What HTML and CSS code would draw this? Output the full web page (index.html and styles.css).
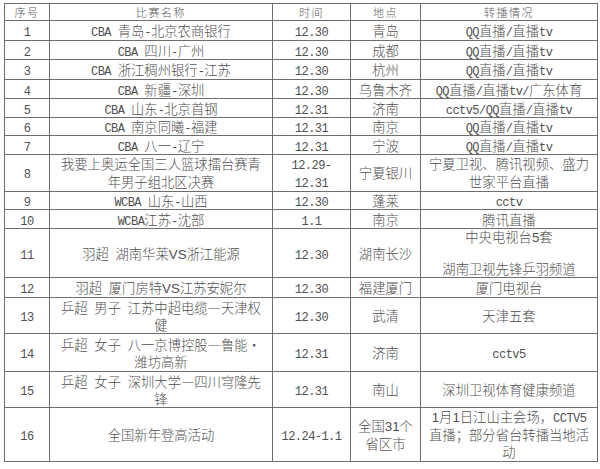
FILE: index.html
```html
<!DOCTYPE html>
<html lang="zh">
<head>
<meta charset="utf-8">
<title>赛事转播</title>
<link rel="stylesheet" href="styles.css">
</head>
<body>
<table class="sched">
  <colgroup>
    <col class="c1"><col class="c2"><col class="c3"><col class="c4"><col class="c5">
  </colgroup>
  <thead>
    <tr class="h17"><th>序号</th><th>比赛名称</th><th>时间</th><th>地点</th><th>转播情况</th></tr>
  </thead>
  <tbody>
    <tr class="h20"><td><span class="en">1</span></td><td><span class="en">CBA </span>青岛<span class="en">-</span>北京农商银行</td><td><span class="en">12.30</span></td><td>青岛</td><td><span class="en">QQ</span>直播<span class="en">/</span>直播<span class="en">tv</span></td></tr>
    <tr class="h19"><td><span class="en">2</span></td><td><span class="en">CBA </span>四川<span class="en">-</span>广州</td><td><span class="en">12.30</span></td><td>成都</td><td><span class="en">QQ</span>直播<span class="en">/</span>直播<span class="en">tv</span></td></tr>
    <tr class="h20"><td><span class="en">3</span></td><td><span class="en">CBA </span>浙江稠州银行<span class="en">-</span>江苏</td><td><span class="en">12.30</span></td><td>杭州</td><td><span class="en">QQ</span>直播<span class="en">/</span>直播<span class="en">tv</span></td></tr>
    <tr class="h19"><td><span class="en">4</span></td><td><span class="en">CBA </span>新疆<span class="en">-</span>深圳</td><td><span class="en">12.30</span></td><td>乌鲁木齐</td><td><span class="en">QQ</span>直播<span class="en">/</span>直播<span class="en">tv/</span>广东体育</td></tr>
    <tr class="h19"><td><span class="en">5</span></td><td><span class="en">CBA </span>山东<span class="en">-</span>北京首钢</td><td><span class="en">12.31</span></td><td>济南</td><td><span class="en">cctv5/QQ</span>直播<span class="en">/</span>直播<span class="en">tv</span></td></tr>
    <tr class="h18"><td><span class="en">6</span></td><td><span class="en">CBA </span>南京同曦<span class="en">-</span>福建</td><td><span class="en">12.31</span></td><td>南京</td><td><span class="en">QQ</span>直播<span class="en">/</span>直播<span class="en">tv</span></td></tr>
    <tr class="h19"><td><span class="en">7</span></td><td><span class="en">CBA </span>八一<span class="en">-</span>辽宁</td><td><span class="en">12.31</span></td><td>宁波</td><td><span class="en">QQ</span>直播<span class="en">/</span>直播<span class="en">tv</span></td></tr>
    <tr class="h37 l18"><td><span class="en">8</span></td><td>我要上奥运全国三人篮球擂台赛青年男子组北区决赛</td><td><span class="en">12.29-<br>12.31</span></td><td>宁夏银川</td><td>宁夏卫视、腾讯视频、盛力世家平台直播</td></tr>
    <tr class="h18"><td><span class="en">9</span></td><td><span class="en">WCBA </span>山东<span class="en">-</span>山西</td><td><span class="en">12.30</span></td><td>蓬莱</td><td><span class="en">cctv</span></td></tr>
    <tr class="h19"><td><span class="en">10</span></td><td><span class="en">WCBA</span>江苏<span class="en">-</span>沈部</td><td><span class="en">1.1</span></td><td>南京</td><td>腾讯直播</td></tr>
    <tr class="h49"><td><span class="en">11</span></td><td>羽超 湖南华莱<span class="sans">VS</span>浙江能源</td><td><span class="en">12.30</span></td><td>湖南长沙</td><td class="tight">中央电视台<span class="sans">5</span>套<br><br>湖南卫视先锋乒羽频道</td></tr>
    <tr class="h20"><td><span class="en">12</span></td><td>羽超 厦门房特<span class="sans">VS</span>江苏安妮尔</td><td><span class="en">12.30</span></td><td>福建厦门</td><td>厦门电视台</td></tr>
    <tr class="h36"><td><span class="en">13</span></td><td>乒超 男子 江苏中超电缆—天津权健</td><td><span class="en">12.30</span></td><td>武清</td><td>天津五套</td></tr>
    <tr class="h38"><td><span class="en">14</span></td><td>乒超 女子 八一京博控股—鲁能·潍坊高新</td><td><span class="en">12.31</span></td><td>济南</td><td><span class="en">cctv5</span></td></tr>
    <tr class="h36"><td><span class="en">15</span></td><td>乒超 女子 深圳大学—四川穹隆先锋</td><td><span class="en">12.31</span></td><td>南山</td><td>深圳卫视体育健康频道</td></tr>
    <tr class="h54 l175"><td><span class="en">16</span></td><td>全国新年登高活动</td><td><span class="en">12.24-1.1</span></td><td>全国<span class="sans">31</span>个省区市</td><td><span class="sans">1</span>月<span class="sans">1</span>日江山主会场，<span class="en">CCTV5</span>直播；部分省台转播当地活动</td></tr>
  </tbody>
</table>
</body>
</html>
```
FILE: styles.css
```css
html, body {
  margin: 0;
  background: #ffffff;
}

body {
  font-family: "Noto Sans CJK SC", "Noto Sans CJK JP", sans-serif;
  color: #505050;
}

.sched {
  border-collapse: collapse;
  table-layout: fixed;
  width: 593px;
  margin: 3px 0 0 4px;
  font-size: 13.33px;
  line-height: 17px;
  font-weight: 300;
}

.c1 { width: 45px; }
.c2 { width: 223px; }
.c3 { width: 78px; }
.c4 { width: 70px; }
.c5 { width: 177px; }

.sched th,
.sched td {
  border: 1px solid #6e6e6e;
  padding: 0 5px;
  text-align: center;
  vertical-align: middle;
  font-weight: 300;
  word-spacing: 3.7px;
}

.sched td:nth-child(2) {
  padding: 0 6px;
}

.sched th {
  font-size: 11px;
  letter-spacing: 1.5px;
  line-height: 14px;
  color: #5a5a5a;
}

.l18 td {
  line-height: 18px;
}

.l175 td {
  line-height: 17.5px;
}

.en {
  font-family: "Liberation Mono", monospace;
  font-size: 12px;
  font-weight: 400;
  line-height: 10px;
  letter-spacing: -0.55px;
  word-spacing: 0;
}

.sans {
  font-family: "Liberation Sans", sans-serif;
  font-weight: 400;
  line-height: 10px;
  word-spacing: 0;
}

.sched td.tight {
  line-height: 16px;
}

.h17 { height: 17px; }
.h18 { height: 18px; }
.h19 { height: 19px; }
.h20 { height: 20px; }
.h36 { height: 36px; }
.h37 { height: 37px; }
.h38 { height: 38px; }
.h49 { height: 49px; }
.h54 { height: 54px; }
```
